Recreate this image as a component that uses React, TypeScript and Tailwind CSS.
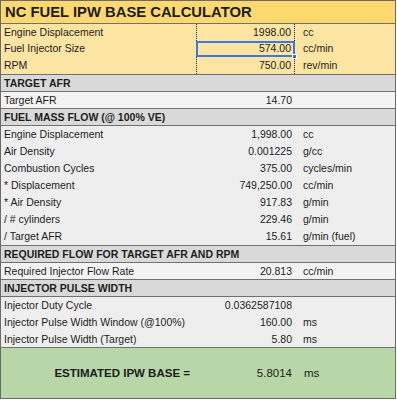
import React from 'react';

type Row = { label: string; value: string; unit?: string };

const fuelMassRows: Row[] = [
  { label: 'Engine Displacement', value: '1,998.00', unit: 'cc' },
  { label: 'Air Density', value: '0.001225', unit: 'g/cc' },
  { label: 'Combustion Cycles', value: '375.00', unit: 'cycles/min' },
  { label: '* Displacement', value: '749,250.00', unit: 'cc/min' },
  { label: '* Air Density', value: '917.83', unit: 'g/min' },
  { label: '/ # cylinders', value: '229.46', unit: 'g/min' },
  { label: '/ Target AFR', value: '15.61', unit: 'g/min (fuel)' },
];

const pulseRows: Row[] = [
  { label: 'Injector Duty Cycle', value: '0.0362587108' },
  { label: 'Injector Pulse Width Window (@100%)', value: '160.00', unit: 'ms' },
  { label: 'Injector Pulse Width (Target)', value: '5.80', unit: 'ms' },
];

function SectionHeader({ title }: { title: string }) {
  return (
    <div className="flex h-[17px] items-center border-b border-[#707070] bg-[#d9d9d9] pl-[3px] font-bold">
      {title}
    </div>
  );
}

function DataRow({ row, height = 'h-[17px]' }: { row: Row; height?: string }) {
  return (
    <div className={`grid grid-cols-[195px_99px_1fr] items-center ${height}`}>
      <span className="whitespace-nowrap pl-[3px]">{row.label}</span>
      <span className="pr-[3px] text-right">{row.value}</span>
      <span className="pl-[8px]">{row.unit}</span>
    </div>
  );
}

export default function App() {
  return (
    <div className="h-[400px] w-[397px] bg-white">
      <div className="w-[396px] border border-[#6a6a6a] font-['Liberation_Sans',Arial,sans-serif] text-[10.5px] leading-[13px] text-[#1c1c1c]">
        {/* Title */}
        <div className="flex h-[23px] items-center border-b border-[#707070] bg-[#fdd86f] pl-[4px] text-[14.8px] font-bold">
          NC FUEL IPW BASE CALCULATOR
        </div>

        {/* Inputs */}
        <div className="grid h-[51px] grid-rows-3 border-b border-[#707070] bg-[#fce5a3]">
          {[
            { label: 'Engine Displacement', value: '1998.00', unit: 'cc' },
            { label: 'Fuel Injector Size', value: '574.00', unit: 'cc/min' },
            { label: 'RPM', value: '750.00', unit: 'rev/min' },
          ].map((r, i) => (
            <div key={r.label} className="grid grid-cols-[195px_99px_1fr] items-stretch">
              <span className="flex items-center pl-[3px]">{r.label}</span>
              <span className="relative flex items-center justify-end border-x border-dotted border-[#222] pr-[3px]">
                {r.value}
                {i === 1 && (
                  <span className="absolute -left-px -right-px top-0 bottom-0 border-2 border-[#3c78e0]">
                    <span className="absolute -bottom-[4px] -right-[4px] h-[5px] w-[5px] border border-white bg-[#3c78e0]" />
                  </span>
                )}
              </span>
              <span className="flex items-center pl-[8px]">{r.unit}</span>
            </div>
          ))}
        </div>

        <SectionHeader title="TARGET AFR" />
        <div className="border-b border-[#707070] bg-[#f3f3f3]">
          <DataRow row={{ label: 'Target AFR', value: '14.70' }} height="h-[16px]" />
        </div>

        <SectionHeader title="FUEL MASS FLOW (@ 100% VE)" />
        <div className="border-b border-[#707070] bg-[#eeeeee]">
          {fuelMassRows.map((r) => (
            <DataRow key={r.label} row={r} />
          ))}
        </div>

        <SectionHeader title="REQUIRED FLOW FOR TARGET AFR AND RPM" />
        <div className="border-b border-[#707070] bg-[#f3f3f3]">
          <DataRow row={{ label: 'Required Injector Flow Rate', value: '20.813', unit: 'cc/min' }} height="h-[16px]" />
        </div>

        <SectionHeader title="INJECTOR PULSE WIDTH" />
        <div className="border-b border-[#707070] bg-[#eeeeee]">
          {pulseRows.map((r, i) => (
            <DataRow key={r.label} row={r} height={i === 2 ? 'h-[16px]' : 'h-[17px]'} />
          ))}
        </div>

        {/* Result */}
        <div className="grid h-[50px] grid-cols-[195px_99px_1fr] items-center bg-[#b7d7a8] text-[11.5px]">
          <span className="pr-[6px] text-right font-bold">ESTIMATED IPW BASE =</span>
          <span className="pr-[3px] text-right">5.8014</span>
          <span className="pl-[9px]">ms</span>
        </div>
      </div>
    </div>
  );
}
